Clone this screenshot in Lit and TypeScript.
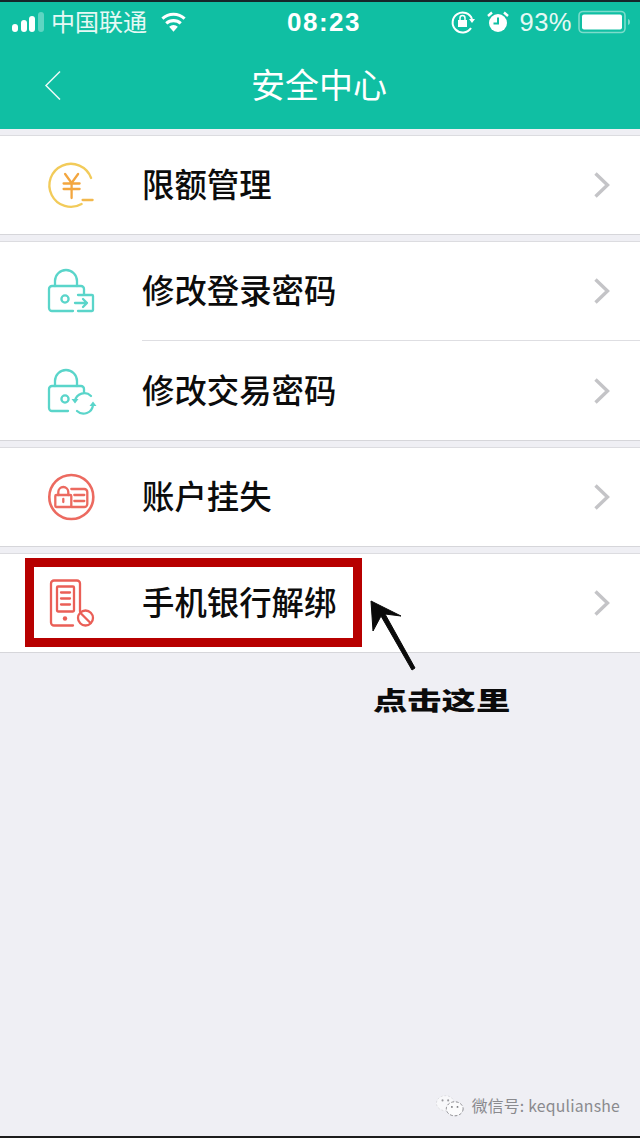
import { LitElement, html, css, svg } from "lit";
import { customElement } from "lit/decorators.js";

const yen = svg`<g fill="none" stroke-width="2.300" stroke-linecap="round">
<path d="M42.500 16A21.500 21.500 0 1 0 33 42" stroke="#f2cb5a"/>
<path d="M34 38h10" stroke="#f2b84c"/>
<path d="M16.500 12l6.500 9 6.500-9M15 21.500h16M15 27h16M23 21.500V36" stroke="#f3a63f"/></g>`;
const lockIn = svg`<g fill="none" stroke="#5ad5ca" stroke-width="2.300" stroke-linecap="round" stroke-linejoin="round">
<path d="M31 43H10a3 3 0 0 1-3-3V21a3 3 0 0 1 3-3h29a3 3 0 0 1 3 3v5"/><path d="M13 18v-5a11 11 0 0 1 22 0v5"/><circle cx="23" cy="31" r="3.600"/>
<path d="M36 27h14a1 1 0 0 1 1 1v14a1 1 0 0 1-1 1H36"/><path d="M33 35h12M41 31l4 4-4 4"/></g>`;
const lockSwap = svg`<g fill="none" stroke="#5ad5ca" stroke-width="2.300" stroke-linecap="round" stroke-linejoin="round">
<path d="M26 43H10a3 3 0 0 1-3-3V21a3 3 0 0 1 3-3h29a3 3 0 0 1 3 3v3"/><path d="M13 18v-5a11 11 0 0 1 22 0v5"/><circle cx="23" cy="31" r="3.600"/>
<path d="M33 33a9.500 9.500 0 0 1 16-5"/><path d="M51 37a9.500 9.500 0 0 1-16 6"/></g>
<path d="M29.500 31h7l-3.500 4.500ZM47.500 38h7L51 33.500Z" fill="#5ad5ca"/>`;
const card = svg`<g fill="none" stroke="#ec6a60" stroke-width="2.300" stroke-linecap="round" stroke-linejoin="round">
<circle cx="23" cy="23" r="22" stroke-width="2.600"/>
<rect x="7" y="21" width="16" height="12" rx="1"/><path d="M10 21v-3a5 5 0 0 1 10 0v3"/><path d="M15 25v3"/>
<path d="M23 15h13a3 3 0 0 1 3 3v12a3 3 0 0 1-3 3H23"/><path d="M26 21h10M26 27h10"/></g>`;
const phone = svg`<g fill="none" stroke="#ea5f57" stroke-width="2.300" stroke-linecap="round" stroke-linejoin="round">
<path d="M24 46H5a3 3 0 0 1-3-3V4a3 3 0 0 1 3-3h23a3 3 0 0 1 3 3v28"/>
<rect x="8" y="7" width="17" height="25" rx="1"/><path d="M12 13h9M12 19h9M12 25h9"/>
<circle cx="36.500" cy="38.500" r="7.500"/><path d="M31.500 33.500l10 10"/></g><circle cx="16" cy="39" r="2.200" fill="#ea5f57"/>`;

const ICON_BOX: Record<string, string> = {
  yen: "-6.600 -1 54 48",
  lock: "0 -1 54 48",
  card: "-6.300 -1 54 48",
  phone: "-7 -0.500 54 48",
};

@customElement("app-root")
export class AppRoot extends LitElement {
  static styles = css`
    :host { display: block; position: relative; height: 1138px; overflow: hidden; background: #efeff4;
      font-family: "Noto Sans CJK SC", "Noto Sans", sans-serif; }
    .page { display: flex; flex-direction: column; height: 1138px; border-top: 2px solid #16262a; border-bottom: 2px solid #1c1c1c; box-sizing: border-box; }
    .head { background: #10bfa3; color: #fff; height: 127px; flex: none; display: flex; flex-direction: column; }
    .status { display: flex; align-items: center; height: 40px; padding: 0 8px 0 12px; font-size: 24px; line-height: 40px; }
    .left, .right { display: flex; align-items: center; flex: 1; }
    .right { justify-content: flex-end; }
    .sig { display: flex; align-items: flex-end; gap: 2.600px; height: 20px; margin-right: 7px; width: 32px; }
    .sig i { width: 6px; background: #fff; border-radius: 3px; display: block; }
    .sig i.off { background: #5ed5c2; }
    .carrier { color: #e6f9f5; padding-bottom: 2px; line-height: 38px; }
    .wifi { margin-left: 13px; }
    .time { font: 700 26px "Liberation Sans", sans-serif; letter-spacing: 1.500px; margin-left: 4px; }
    .pct { font: 400 25.500px "Liberation Sans", sans-serif; margin-right: 6px; letter-spacing: .5px; color: #e6f9f5; }
    .nav { flex: 1; display: flex; align-items: center; justify-content: center; font-size: 34px; padding: 0 2px 4px 0; position: relative; }
    .back { position: absolute; left: 44px; top: 28px; }
    .group { margin-top: 6px; background: #fff; border-top: 1px solid #dcdce0; border-bottom: 1px solid #d6d6da; display: flex; flex-direction: column; }
    .group:first-of-type { margin-top: 7px; }
    .row { height: 98px; display: flex; align-items: center; padding-left: 42px; padding-right: 29px; }
    .row.tall { height: 99px; }
    .ico { width: 54px; height: 48px; flex: none; display: block; overflow: visible; }
    .label { margin-left: 46px; font-size: 32.400px; font-weight: 500; color: #0c0c0c; flex: 1; line-height: 46px; padding-bottom: 4px; }
    .sep { height: 1px; background: #dedee2; margin-left: 142px; }
    .fill { flex: 1; display: flex; align-items: flex-end; justify-content: flex-end; padding: 0 20px 18px 0; }
    .mark { display: flex; align-items: center; gap: 7px; font-size: 15.800px; color: #8a8a8e; line-height: 22px; letter-spacing: .2px; }
    .overlay-box { position: absolute; left: 25px; top: 558px; width: 337px; height: 89px; border: 9px solid #b70000; box-sizing: border-box; }
    .arrow { position: absolute; left: 365px; top: 595px; }
    .note { position: absolute; left: 373px; top: 683px; font-size: 24.500px; font-weight: 900; line-height: 34px; color: #0b0b0b; white-space: nowrap; transform-origin: left center; transform: scaleX(1.4); }
  `;

  private chevron() {
    return html`<svg width="18" height="28" viewBox="0 0 18 28"><path d="M2.500 2.500 14.500 14 2.500 25.500" fill="none" stroke="#c4c4c7" stroke-width="3.400"/></svg>`;
  }

  private row(icon: unknown, box: string, label: string, tall = false) {
    return html`<div class="row ${tall ? "tall" : ""}"><svg class="ico" viewBox="${ICON_BOX[box]}">${icon}</svg><span class="label">${label}</span>${this.chevron()}</div>`;
  }

  render() {
    return html`
      <div class="page">
        <div class="head">
          <div class="status">
            <div class="left">
              <div class="sig"><i style="height:8px"></i><i style="height:12px"></i><i style="height:16px"></i><i class="off" style="height:20px"></i></div>
              <span class="carrier">中国联通</span>
              <svg class="wifi" width="27" height="20" viewBox="0 0 28 20"><path d="M14 20 9.500 15a6.500 6.500 0 0 1 9 0Z" fill="#fff"/><path d="M6.500 11.500a11 11 0 0 1 15 0M2.500 6.500a17 17 0 0 1 23 0" fill="none" stroke="#fff" stroke-width="3.200"/></svg>
            </div>
            <span class="time">08:23</span>
            <div class="right">
              <svg width="24" height="24" viewBox="0 0 24 24" style="margin-right:12px"><path d="M21 9A10 10 0 1 0 20 18" fill="none" stroke="#fff" stroke-width="2"/><path d="M18 9h6l-3 4Z" fill="#fff"/><rect x="7" y="10" width="9" height="7" fill="#fff"/><path d="M9 10V8a2.500 2.500 0 0 1 5 0v2" fill="none" stroke="#fff" stroke-width="1.500"/></svg>
              <svg width="22" height="22" viewBox="0 0 22 22" style="margin-right:10px"><circle cx="11" cy="12" r="9" fill="#fff"/><path d="M11 6.500V12.500H6.500" fill="none" stroke="#10bfa3" stroke-width="2"/><path d="M1 5l4-3.500M21 5l-4-3.500" stroke="#fff" stroke-width="2.400"/></svg>
              <span class="pct">93%</span>
              <svg width="54" height="24" viewBox="0 0 54 24"><rect x="1" y="1.500" width="46" height="21" rx="4" fill="none" stroke="#7cdccb" stroke-width="1.600"/><rect x="4" y="4.500" width="40" height="15" rx="2" fill="#fff"/><path d="M50 9c1.500 .3 2 1.500 2 3s-.5 2.700-2 3Z" fill="#7cdccb"/></svg>
            </div>
          </div>
          <div class="nav">
            <svg class="back" width="18" height="30" viewBox="0 0 18 30"><path d="M16 1.500 2 15.500l14 14" fill="none" stroke="#e8faf6" stroke-width="1.500"/></svg>
            安全中心
          </div>
        </div>

        <div class="group">${this.row(yen, "yen", "限额管理")}</div>
        <div class="group">
          ${this.row(lockIn, "lock", "修改登录密码")}
          <div class="sep"></div>
          ${this.row(lockSwap, "lock", "修改交易密码", true)}
        </div>
        <div class="group">${this.row(card, "card", "账户挂失")}</div>
        <div class="group">${this.row(phone, "phone", "手机银行解绑")}</div>

        <div class="fill">
          <div class="mark">
            <svg width="29" height="24" viewBox="0 0 31 24">
              <ellipse cx="10" cy="9" rx="9.500" ry="8" fill="#f8f8fa" stroke="#c9c9cd" stroke-width=".6" stroke-dasharray="2 2"/>
              <ellipse cx="20" cy="15" rx="9" ry="7.500" fill="#fbfbfc" stroke="#77777c" stroke-width=".9" stroke-dasharray="3 2"/>
              <circle cx="7" cy="6" r="1.100" fill="#9a9a9e"/><circle cx="13" cy="6" r="1.100" fill="#9a9a9e"/>
              <circle cx="17" cy="13" r="1" fill="#77777c"/><circle cx="23" cy="13" r="1" fill="#77777c"/>
            </svg>
            <span>微信号: kequlianshe</span>
          </div>
        </div>
      </div>

      <div class="overlay-box"></div>
      <svg class="arrow" width="56" height="80" viewBox="0 0 56 80">
        <path d="M6 6 8 36 16 21 47 75 50 73 20 19 36 21Z" fill="#0a0a0a" stroke="#0a0a0a" stroke-width="1" stroke-linejoin="round"/>
      </svg>
      <div class="note">点击这里</div>
    `;
  }
}
